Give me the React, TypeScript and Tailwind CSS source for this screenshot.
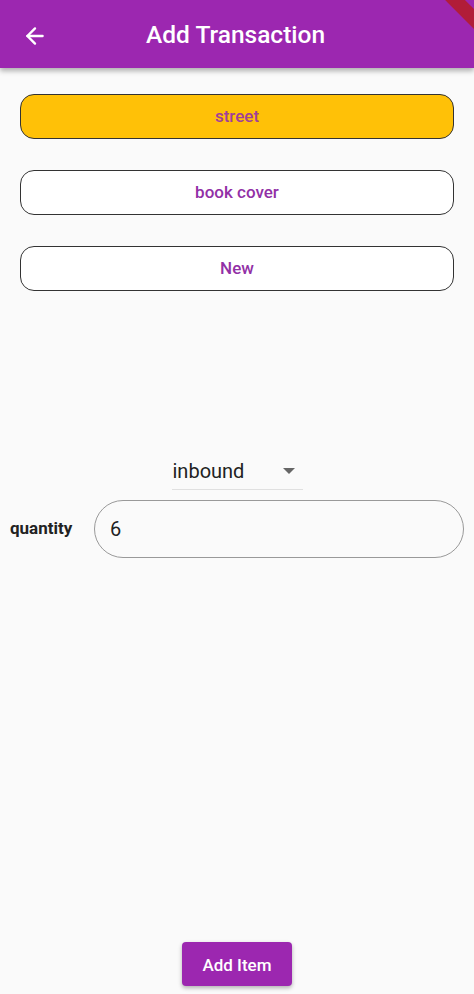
import { ArrowLeft } from "lucide-react"

const categories = [
  { label: "street", selected: true },
  { label: "book cover", selected: false },
  { label: "New", selected: false },
]

export default function App() {
  return (
    <div
      className="relative flex h-[994px] w-[474px] flex-col overflow-hidden bg-[#fafafa]"
      style={{ fontFamily: "Roboto, 'Noto Sans', sans-serif" }}
    >
      <header className="relative z-10 flex h-[68px] shrink-0 items-center bg-[#9c27b0] pt-[3px] shadow-[0_3px_5px_rgba(0,0,0,0.3)]">
        <button className="ml-[20px] flex h-[30px] w-[30px] items-center justify-center text-white">
          <ArrowLeft className="h-[26px] w-[26px]" strokeWidth={2.2} />
        </button>
        <h1 className="ml-[96px] text-[24.5px] font-medium leading-none text-white">Add Transaction</h1>
      </header>

      <div className="pointer-events-none absolute right-[-34px] top-[6px] z-20 h-[14px] w-[80px] rotate-45 bg-[#b71c1c]/80" />

      <div className="flex flex-col gap-[31px] px-[20px] pt-[26px]">
        {categories.map((c) => (
          <button
            key={c.label}
            className={`flex h-[45px] items-center justify-center rounded-[14px] border-[1.5px] border-[#333] text-[17px] font-medium text-[#9230a6] ${
              c.selected ? "bg-[#ffc107] text-[#a0409a]" : "bg-white"
            }`}
          >
            {c.label}
          </button>
        ))}
      </div>

      <div className="mt-[162px] flex justify-center">
        <div className="flex h-[37px] w-[131px] items-center justify-between border-b border-[#e0e0e0] pl-[1px] pr-[8px]">
          <span className="text-[20px] text-[#222]">inbound</span>
          <svg width="12" height="6" viewBox="0 0 12 6">
            <path d="M0 0 L12 0 L6 6 Z" fill="#666" />
          </svg>
        </div>
      </div>

      <div className="mt-[10px] flex items-center pl-[10px] pr-[10px]">
        <span className="w-[84px] text-[17px] font-bold text-[#222]">quantity</span>
        <div className="flex h-[58px] flex-1 items-center rounded-full border-[1.5px] border-[#999] pl-[15px]">
          <span className="text-[20px] text-[#222]">6</span>
        </div>
      </div>

      <div className="mt-auto mb-[8px] flex justify-center">
        <button className="h-[44px] w-[110px] rounded-[4px] bg-[#9c27b0] pt-[3px] text-[17px] font-medium text-white shadow-[0_2px_4px_rgba(0,0,0,0.3)]">
          Add Item
        </button>
      </div>
    </div>
  )
}
